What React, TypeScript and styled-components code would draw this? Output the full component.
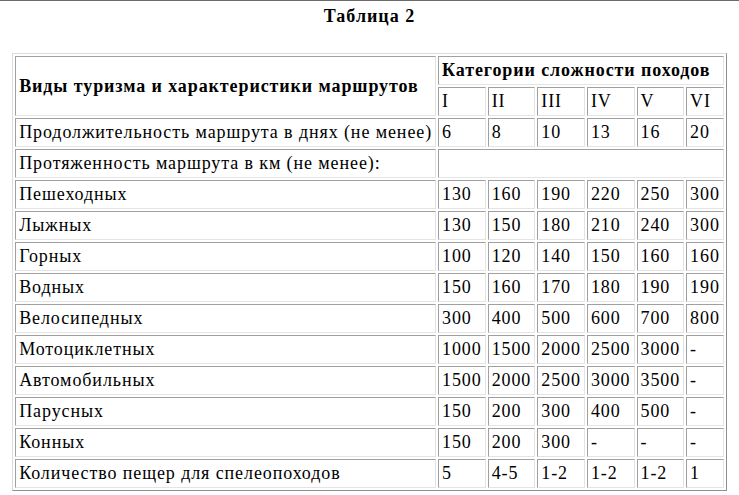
import styled, { createGlobalStyle } from "styled-components";

const serif = `"Liberation Serif", "Times New Roman", Times, serif`;

const GlobalStyle = createGlobalStyle`
  html, body {
    margin: 0;
    padding: 0;
    background: #fff;
  }
  body {
    font-family: ${serif};
    color: #000;
  }
`;

const Page = styled.div`
  border-top: 1px solid #6b6b6b;
  padding: 5px 0 0;
  font-family: ${serif};
`;

const Title = styled.p`
  margin: 0 0 26px;
  text-align: center;
  font-family: ${serif};
  font-size: 18px;
  font-weight: bold;
  letter-spacing: 1px;
`;

const Table = styled.table`
  margin: 0 auto;
  border-collapse: separate;
  border-spacing: 2px;
  border: 1px solid;
  border-color: #dcdcdc #8e8e8e #8e8e8e #dcdcdc;
  font-family: ${serif};
  font-size: 18px;
`;

const Cell = styled.td<{ $bold?: boolean }>`
  padding: 3px;
  border: 1px solid;
  border-color: #a0a0a0 #e4e4e4 #e4e4e4 #a0a0a0;
  text-align: left;
  vertical-align: middle;
  white-space: nowrap;
  font-family: ${serif};
  font-size: 18px;
  letter-spacing: 0.9px;
  font-weight: ${(p) => (p.$bold ? "bold" : "normal")};
`;

const Footer = styled.div`
  margin-top: 5px;
  border-top: 2px solid #e6e6e6;
`;

const categories = ["I", "II", "III", "IV", "V", "VI"];

const rows: [string, string[] | null][] = [
  ["Продолжительность маршрута в днях (не менее)", ["6", "8", "10", "13", "16", "20"]],
  ["Протяженность маршрута в км (не менее):", null],
  ["Пешеходных", ["130", "160", "190", "220", "250", "300"]],
  ["Лыжных", ["130", "150", "180", "210", "240", "300"]],
  ["Горных", ["100", "120", "140", "150", "160", "160"]],
  ["Водных", ["150", "160", "170", "180", "190", "190"]],
  ["Велосипедных", ["300", "400", "500", "600", "700", "800"]],
  ["Мотоциклетных", ["1000", "1500", "2000", "2500", "3000", "-"]],
  ["Автомобильных", ["1500", "2000", "2500", "3000", "3500", "-"]],
  ["Парусных", ["150", "200", "300", "400", "500", "-"]],
  ["Конных", ["150", "200", "300", "-", "-", "-"]],
  ["Количество пещер для спелеопоходов", ["5", "4-5", "1-2", "1-2", "1-2", "1"]],
];

export default function App() {
  return (
    <Page>
      <GlobalStyle />
      <Title>Таблица 2</Title>
      <Table>
        <tbody>
          <tr>
            <Cell as="th" rowSpan={2} $bold>
              Виды туризма и характеристики маршрутов
            </Cell>
            <Cell as="th" colSpan={6} $bold>
              Категории сложности походов
            </Cell>
          </tr>
          <tr>
            {categories.map((c) => (
              <Cell key={c}>{c}</Cell>
            ))}
          </tr>
          {rows.map(([label, values]) => (
            <tr key={label}>
              <Cell>{label}</Cell>
              {values ? (
                values.map((v, i) => <Cell key={i}>{v}</Cell>)
              ) : (
                <Cell colSpan={6} />
              )}
            </tr>
          ))}
        </tbody>
      </Table>
      <Footer />
    </Page>
  );
}
